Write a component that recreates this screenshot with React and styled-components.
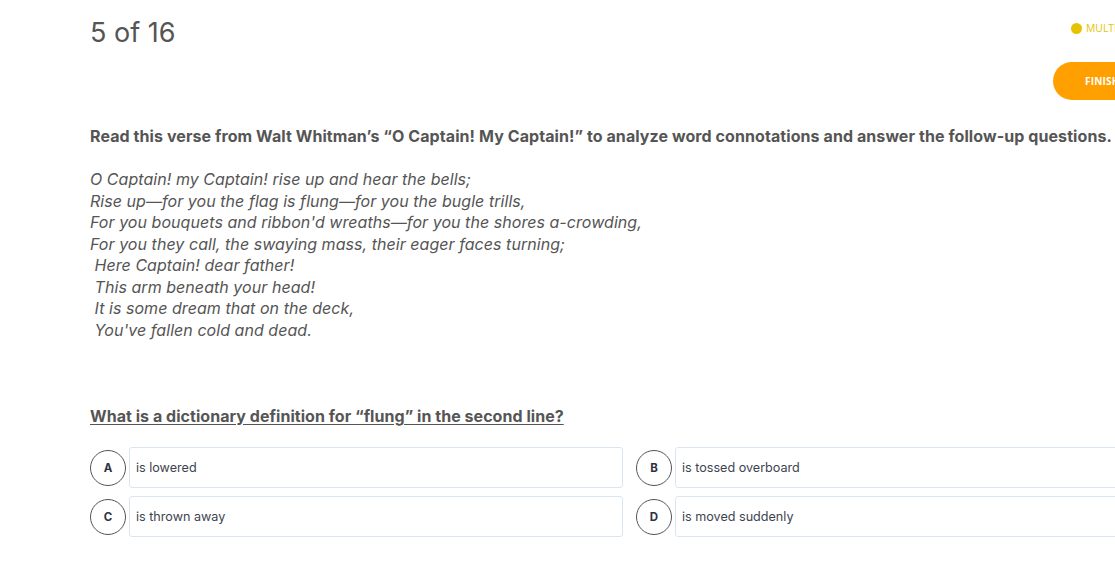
import React from 'react';
import styled, { createGlobalStyle } from 'styled-components';

const GlobalStyle = createGlobalStyle`
  html, body {
    margin: 0;
    padding: 0;
    background: #ffffff;
    overflow: hidden;
  }
  body {
    font-family: Inter, "Noto Sans", sans-serif;
    color: #555555;
  }
`;

const Page = styled.div`
  width: 1079px;
  padding: 16px 0 40px 90px;
`;

const Header = styled.header`
  display: flex;
  justify-content: space-between;
  align-items: flex-start;
`;

const Counter = styled.h2`
  margin: 1px 0 0;
  font-size: 27px;
  line-height: 32px;
  font-weight: 400;
  color: #555555;
`;

const HeaderRight = styled.div`
  width: 116px;
  display: flex;
  flex-direction: column;
  align-items: flex-start;
`;

const Status = styled.div`
  display: flex;
  align-items: center;
  gap: 4px;
  margin: 5px 0 0 18px;
  font-family: "Open Sans", sans-serif;
  font-size: 10.4px;
  color: #e6c300;
  white-space: nowrap;
  text-transform: uppercase;
`;

const Dot = styled.span`
  width: 11px;
  height: 11px;
  border-radius: 50%;
  background: #e6c300;
`;

const FinishButton = styled.button`
  margin-top: 27px;
  height: 38px;
  padding: 0 32px;
  border: none;
  border-radius: 19px;
  background: #ff9f00;
  color: #ffffff;
  font-family: "Open Sans", sans-serif;
  font-size: 10px;
  font-weight: 700;
  letter-spacing: 0.2px;
  text-transform: uppercase;
  white-space: nowrap;
`;

const Instruction = styled.p`
  margin: 24px 0 0;
  font-size: 16px;
  line-height: 24px;
  font-weight: 700;
  letter-spacing: 0.08px;
  white-space: nowrap;
`;

const Verse = styled.div`
  margin-top: 21px;
  font-size: 16px;
  line-height: 21.5px;
  font-style: italic;
  letter-spacing: 0.05px;
  white-space: pre;
`;

const Question = styled.p`
  margin: 63px 0 0;
  font-size: 16px;
  line-height: 24px;
  font-weight: 700;
  letter-spacing: 0.04px;
  text-decoration: underline;
  text-underline-offset: 2px;
`;

const Options = styled.div`
  margin-top: 19px;
  display: grid;
  grid-template-columns: 533px 533px;
  column-gap: 13px;
  row-gap: 8px;
`;

const Option = styled.div`
  display: flex;
  align-items: center;
  gap: 3px;
`;

const Letter = styled.span`
  flex: none;
  width: 34px;
  height: 34px;
  border: 1px solid #555555;
  border-radius: 50%;
  display: flex;
  align-items: center;
  justify-content: center;
  font-size: 11.5px;
  font-weight: 700;
  color: #2d3340;
`;

const AnswerBox = styled.div`
  flex: 1;
  height: 39px;
  border: 1px solid #dbe6f0;
  border-radius: 3px;
  display: flex;
  align-items: center;
  padding-left: 6px;
  font-size: 12.6px;
  color: #3d4451;
`;

const lines = [
  'O Captain! my Captain! rise up and hear the bells;',
  'Rise up\u2014for you the flag is flung\u2014for you the bugle trills,',
  "For you bouquets and ribbon'd wreaths\u2014for you the shores a-crowding,",
  'For you they call, the swaying mass, their eager faces turning;',
  ' Here Captain! dear father!',
  ' This arm beneath your head!',
  ' It is some dream that on the deck,',
  " You've fallen cold and dead.",
];

const answers = [
  { key: 'A', text: 'is lowered' },
  { key: 'B', text: 'is tossed overboard' },
  { key: 'C', text: 'is thrown away' },
  { key: 'D', text: 'is moved suddenly' },
];

const App = () => {
  return (
    <>
      <GlobalStyle />
      <Page>
        <Header>
          <Counter>5 of 16</Counter>
          <HeaderRight>
            <Status>
              <Dot />
              Multiple choice
            </Status>
            <FinishButton>Finish</FinishButton>
          </HeaderRight>
        </Header>

        <Instruction>
          Read this verse from Walt Whitman’s “O Captain! My Captain!” to analyze word connotations and answer the follow-up questions.
        </Instruction>

        <Verse>{lines.join('\n')}</Verse>

        <Question>What is a dictionary definition for “flung” in the second line?</Question>

        <Options>
          {answers.map(a => (
            <Option key={a.key}>
              <Letter>{a.key}</Letter>
              <AnswerBox>{a.text}</AnswerBox>
            </Option>
          ))}
        </Options>
      </Page>
    </>
  );
};

export default App;
